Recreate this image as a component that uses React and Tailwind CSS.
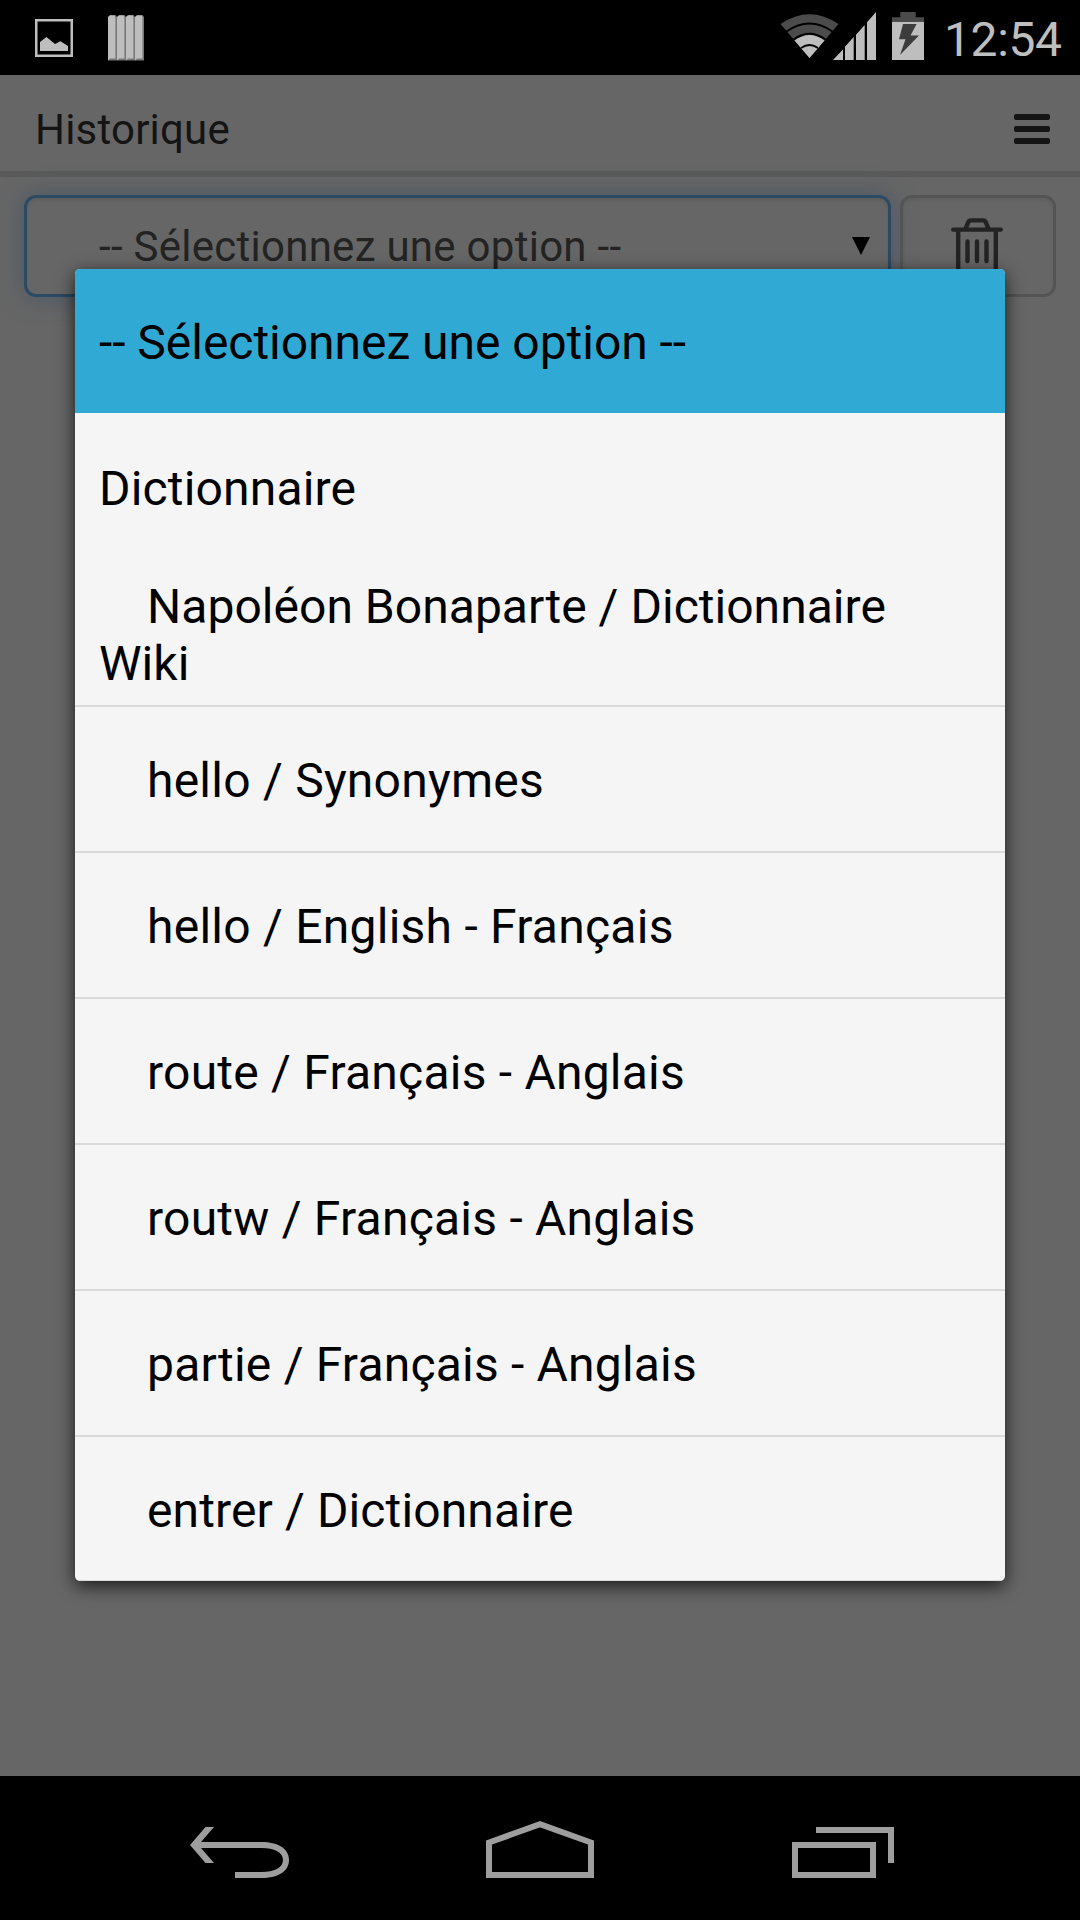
const OPTIONS = [
  { id: 'wiki', label: 'Napoléon Bonaparte / Dictionnaire Wiki', tracking: 'tracking-[0.03px]' },
  { id: 'syn', label: 'hello / Synonymes', tracking: 'tracking-[0.24px]' },
  { id: 'en-fr', label: 'hello / English - Français', tracking: 'tracking-[0.25px]' },
  { id: 'route', label: 'route / Français - Anglais', tracking: 'tracking-[0.23px]' },
  { id: 'routw', label: 'routw / Français - Anglais', tracking: 'tracking-[0.23px]' },
  { id: 'partie', label: 'partie / Français - Anglais', tracking: 'tracking-[0.2px]' },
  { id: 'entrer', label: 'entrer / Dictionnaire', tracking: 'tracking-[0.12px]' },
]

function PictureIcon() {
  return (
    <svg className="h-[38px] w-[38px]" viewBox="0 0 38 38">
      <rect x="1.25" y="1.25" width="35.5" height="35.5" fill="none" stroke="#bebebe" strokeWidth="2.5" />
      <path d="M5 32V23L11.5 18L20 25L25.5 22.3L33 27V32Z" fill="#bebebe" />
    </svg>
  )
}

function BooksIcon() {
  return (
    <svg className="h-[46px] w-9" viewBox="0 0 36 46">
      {[0, 9, 18, 27].map(x => (
        <g key={x}>
          <path d={`M${x} 2L${x + 2} 0H${x + 7.5}L${x + 9} 2V45.5H${x}Z`} fill="#777" />
          <path d={`M${x} 2L${x + 2} 0.5H${x + 6.5}L${x + 7.4} 2V43.5H${x + 2}L${x} 45.5Z`} fill="#bebebe" />
        </g>
      ))}
    </svg>
  )
}

function WifiIcon() {
  return (
    <svg className="h-11 w-[59px]" viewBox="0 0 59 44">
      <path d="M0.5 10Q29.5 -9.5 58.5 10L29.5 44Z" fill="#4b4b4b" />
      <path d="M14.5 26.5Q29.5 15.5 44.5 26.5L29.5 44Z" fill="#bebebe" />
      <path d="M6.5 17.5Q29.5 1.5 52.5 17.5M13.5 25.5Q29.5 14 45.5 25.5M21 34Q29.5 28 38 34" fill="none" stroke="#000" strokeWidth="1.8" />
    </svg>
  )
}

function SignalIcon() {
  return (
    <svg className="h-12 w-[43px]" viewBox="0 0 43 48">
      <path d="M0 48L10 37.5V48ZM12 48V34.8L20.7 25V48ZM23 48V22.8L31.7 13V48ZM34 48V10.2L43 0V48Z" fill="#bebebe" />
    </svg>
  )
}

function BatteryIcon() {
  return (
    <svg className="h-12 w-8" viewBox="0 0 32 48">
      <path d="M0 10V5.3H8.3V0H23.7V5.3H32V10Z" fill="#4b4b4b" />
      <rect y="10" width="32" height="38" fill="#bebebe" />
      <path d="M11 12H24.6L18.5 23.5H27L8 43L13.5 27.3H7Z" fill="#3c3c3c" />
    </svg>
  )
}

function TrashIcon() {
  return (
    <svg className="h-[62px] w-[52px]" viewBox="0 0 52 62" fill="none" stroke="#232323" strokeWidth="4.4">
      <path d="M14.5 11L17.2 4.2Q18 2.4 20 2.4H32Q34 2.4 34.8 4.2L37.5 11" />
      <path d="M2.2 11.6H49.8" strokeLinecap="round" />
      <path d="M7.2 12V56Q7.2 59.6 11 59.6H41Q44.8 59.6 44.8 56V12" />
      <path d="M16.5 23.5V43M26 23.5V43M35.5 23.5V43" strokeLinecap="round" />
    </svg>
  )
}

function StatusBar() {
  return (
    <div className="flex h-[75px] shrink-0 items-start bg-black">
      <div className="flex gap-[35px] pt-[15px] pl-[35px]">
        <div className="pt-1"><PictureIcon /></div>
        <BooksIcon />
      </div>
      <div className="ml-auto flex items-start pt-3 pr-[17px]">
        <div className="pt-0.5"><WifiIcon /></div>
        <div className="-ml-[6px]"><SignalIcon /></div>
        <div className="ml-4"><BatteryIcon /></div>
        <div className="ml-[20px] w-[119px] text-[48px] leading-[56px] tracking-[-0.4px] whitespace-nowrap text-[#bebebe]">12:54</div>
      </div>
    </div>
  )
}

function NavBar() {
  return (
    <div className="flex h-36 shrink-0 items-start bg-black pt-[45px]">
      <svg className="ml-[190px] h-[57px] w-[100px]" viewBox="0 0 100 57">
        <path d="M0 24L15.5 6H24L11 21H72C87 21 99 27 99 39C99 51 87 57 72 57H45V51H72C84 51 93 47 93 39C93 31 84 27 72 27H11L24 42H15.5Z" fill="#9e9e9e" />
      </svg>
      <svg className="ml-[196px] h-[57px] w-[108px]" viewBox="0 0 108 57">
        <path d="M3 54V21.5L54 3.2L105 21.5V54Z" fill="none" stroke="#9e9e9e" strokeWidth="6" />
      </svg>
      <svg className="ml-[198px] h-[57px] w-[102px]" viewBox="0 0 102 57" fill="none" stroke="#9e9e9e" strokeWidth="6">
        <path d="M3 24H81V54H3ZM24 9H99V42" />
      </svg>
    </div>
  )
}

function OptionDialog() {
  return (
    <div className="absolute top-[269px] left-[75px] w-[930px] overflow-hidden rounded-[5px] bg-[#f5f5f5] text-[48px] leading-[57px] text-black shadow-[0_5px_18px_rgba(0,0,0,0.75)]">
      <div className="flex h-36 items-center bg-[#31a9d5] px-6 pt-[3px] tracking-[-0.03px]">-- Sélectionnez une option --</div>
      <div className="flex h-[148px] items-center px-6 pt-[3px] tracking-[0.17px]">Dictionnaire</div>
      <ul>
        {OPTIONS.map(({ id, label, tracking }) => (
          <li key={id} className="flex h-[146px] items-center border-b-2 border-[#dadada] px-6 pt-[3px] last:h-36 last:border-b last:pt-1">
            <span className={`indent-[48px] ${tracking}`}>{label}</span>
          </li>
        ))}
      </ul>
    </div>
  )
}

export default function App() {
  return (
    <div className="relative flex h-[1920px] w-[1080px] flex-col overflow-hidden bg-[#666] font-['Roboto',sans-serif]">
      <StatusBar />

      <header className="flex h-[102px] shrink-0 items-center justify-between border-b-[6px] border-[#5a5a5a] pr-[30px] pl-[35px]">
        <h1 className="pt-3.5 text-[42px] leading-[50px] tracking-[0.2px] text-[#141414]">Historique</h1>
        <div className="flex w-9 flex-col gap-1.5 pt-3">
          <span className="h-1.5 rounded-[2px] bg-[#141414]" />
          <span className="h-1.5 rounded-[2px] bg-[#141414]" />
          <span className="h-1.5 rounded-[2px] bg-[#141414]" />
        </div>
      </header>

      <main className="flex flex-1 items-start gap-[9px] px-6 pt-[18px]">
        <div className="flex h-[102px] w-[867px] items-center justify-between rounded-[12px] border-[3px] border-[#2b4a63] pr-[18px] pl-[72px] text-[42px] leading-[50px] text-[#232323] shadow-[0_0_24px_rgba(43,74,99,0.5),inset_0_3px_3px_rgba(0,0,0,0.08)]">
          <span className="pt-0.5 tracking-[0.27px]">-- Sélectionnez une option --</span>
          <svg className="h-[18px] w-[18px]" viewBox="0 0 18 18">
            <path d="M0 0H18L9 18Z" fill="#000" />
          </svg>
        </div>
        <div className="flex h-[102px] w-[156px] justify-center rounded-[12px] border-[3px] border-[#545454] pt-5 pr-0.5 shadow-[inset_0_3px_3px_rgba(0,0,0,0.06)]">
          <TrashIcon />
        </div>
      </main>

      <NavBar />
      <OptionDialog />
    </div>
  )
}
